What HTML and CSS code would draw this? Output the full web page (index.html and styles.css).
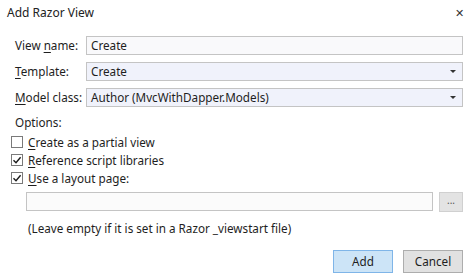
FILE: index.html
```html
<!DOCTYPE html>
<html>
<head>
<meta charset="utf-8">
<link rel="stylesheet" href="styles.css">
</head>
<body>
<div class="dialog">
  <div class="titlebar">
    <span class="title">Add Razor View</span>
    <span class="close">&#x2715;</span>
  </div>
  <div class="fields">
    <label class="lbl">View <u>n</u>ame:</label>
    <div class="input text">Create</div>
    <label class="lbl"><u>T</u>emplate:</label>
    <div class="input combo"><span>Create</span><span class="arrow"></span></div>
    <label class="lbl"><u>M</u>odel class:</label>
    <div class="input combo"><span>Author (MvcWithDapper.Models)</span><span class="arrow"></span></div>
  </div>
  <div class="options-label">Options:</div>
  <div class="checks">
    <div class="check"><span class="box"></span><span><u>C</u>reate as a partial view</span></div>
    <div class="check"><span class="box checked"><svg viewBox="0 0 12 12" width="12" height="12"><path d="M2.5 6.2 L5 8.7 L9.6 3.2" fill="none" stroke="#1a1a1a" stroke-width="1.4"/></svg></span><span><u>R</u>eference script libraries</span></div>
    <div class="check"><span class="box checked"><svg viewBox="0 0 12 12" width="12" height="12"><path d="M2.5 6.2 L5 8.7 L9.6 3.2" fill="none" stroke="#1a1a1a" stroke-width="1.4"/></svg></span><span><u>U</u>se a layout page:</span></div>
  </div>
  <div class="layout-row">
    <div class="input layout"></div>
    <div class="browse">...</div>
  </div>
  <div class="hint">(Leave empty if it is set in a Razor _viewstart file)</div>
  <div class="buttons">
    <div class="btn primary">Add</div>
    <div class="btn">Cancel</div>
  </div>
</div>
</body>
</html>
```
FILE: styles.css
```css
html, body {
  margin: 0;
  padding: 0;
  background: #ffffff;
}
body {
  font-family: "Noto Sans", "Open Sans", sans-serif;
  font-size: 11.7px;
  color: #1e1e1e;
  width: 474px;
  height: 277px;
  overflow: hidden;
}
u { text-decoration-thickness: 1px; text-underline-offset: 2px; }
.dialog {
  display: flex;
  flex-direction: column;
}
.titlebar {
  height: 25px;
  display: flex;
  align-items: center;
  justify-content: space-between;
  padding: 0 10px 0 7px;
}
.title { font-size: 12px; color: #222; }
.close { font-size: 11px; color: #333; }
.fields {
  margin-top: 11px;
  padding: 0 11px 0 15px;
  display: grid;
  grid-template-columns: 71px 1fr;
  grid-auto-rows: 19px;
  row-gap: 7px;
  align-items: center;
}
.lbl { line-height: 19px; }
.input {
  box-sizing: border-box;
  height: 19px;
  border: 1px solid #c4c4c4;
  background: #f9f9fb;
  padding: 0 4px;
  line-height: 17px;
  display: flex;
  align-items: center;
}
.combo {
  background: #f0f2fb;
  justify-content: space-between;
}
.arrow {
  width: 0;
  height: 0;
  border-left: 3px solid transparent;
  border-right: 3px solid transparent;
  border-top: 3px solid #333;
  margin-right: 2px;
}
.options-label {
  margin-top: 7px;
  padding-left: 15px;
  line-height: 16px;
}
.checks {
  margin-top: 3px;
  padding-left: 11px;
  display: flex;
  flex-direction: column;
}
.check {
  height: 18px;
  display: flex;
  align-items: center;
  gap: 5px;
}
.box {
  box-sizing: border-box;
  width: 12px;
  height: 12px;
  border: 1px solid #7a7a7a;
  background: #fff;
  display: flex;
  align-items: center;
  justify-content: center;
}
.box svg { display: block; margin: -1px; }
.layout-row {
  margin-top: 5px;
  padding-left: 26px;
  display: flex;
  gap: 6px;
}
.layout {
  width: 407px;
  height: 19px;
  background: #fbfbfb;
}
.browse {
  box-sizing: border-box;
  width: 24px;
  height: 20px;
  background: #e3e3e3;
  border: 1px solid #d0d0d0;
  text-align: center;
  line-height: 14px;
  font-size: 10px;
  color: #555;
}
.hint {
  margin-top: 8px;
  padding-left: 28px;
  line-height: 16px;
}
.buttons {
  margin-top: 14px;
  padding-right: 11px;
  display: flex;
  justify-content: flex-end;
  gap: 10px;
}
.btn {
  box-sizing: border-box;
  width: 60px;
  height: 23px;
  border: 1px solid #adadad;
  background: #e1e1e1;
  text-align: center;
  line-height: 21px;
}
.btn.primary {
  background: #cce4f7;
  border-color: #7fb5e8;
}
```
